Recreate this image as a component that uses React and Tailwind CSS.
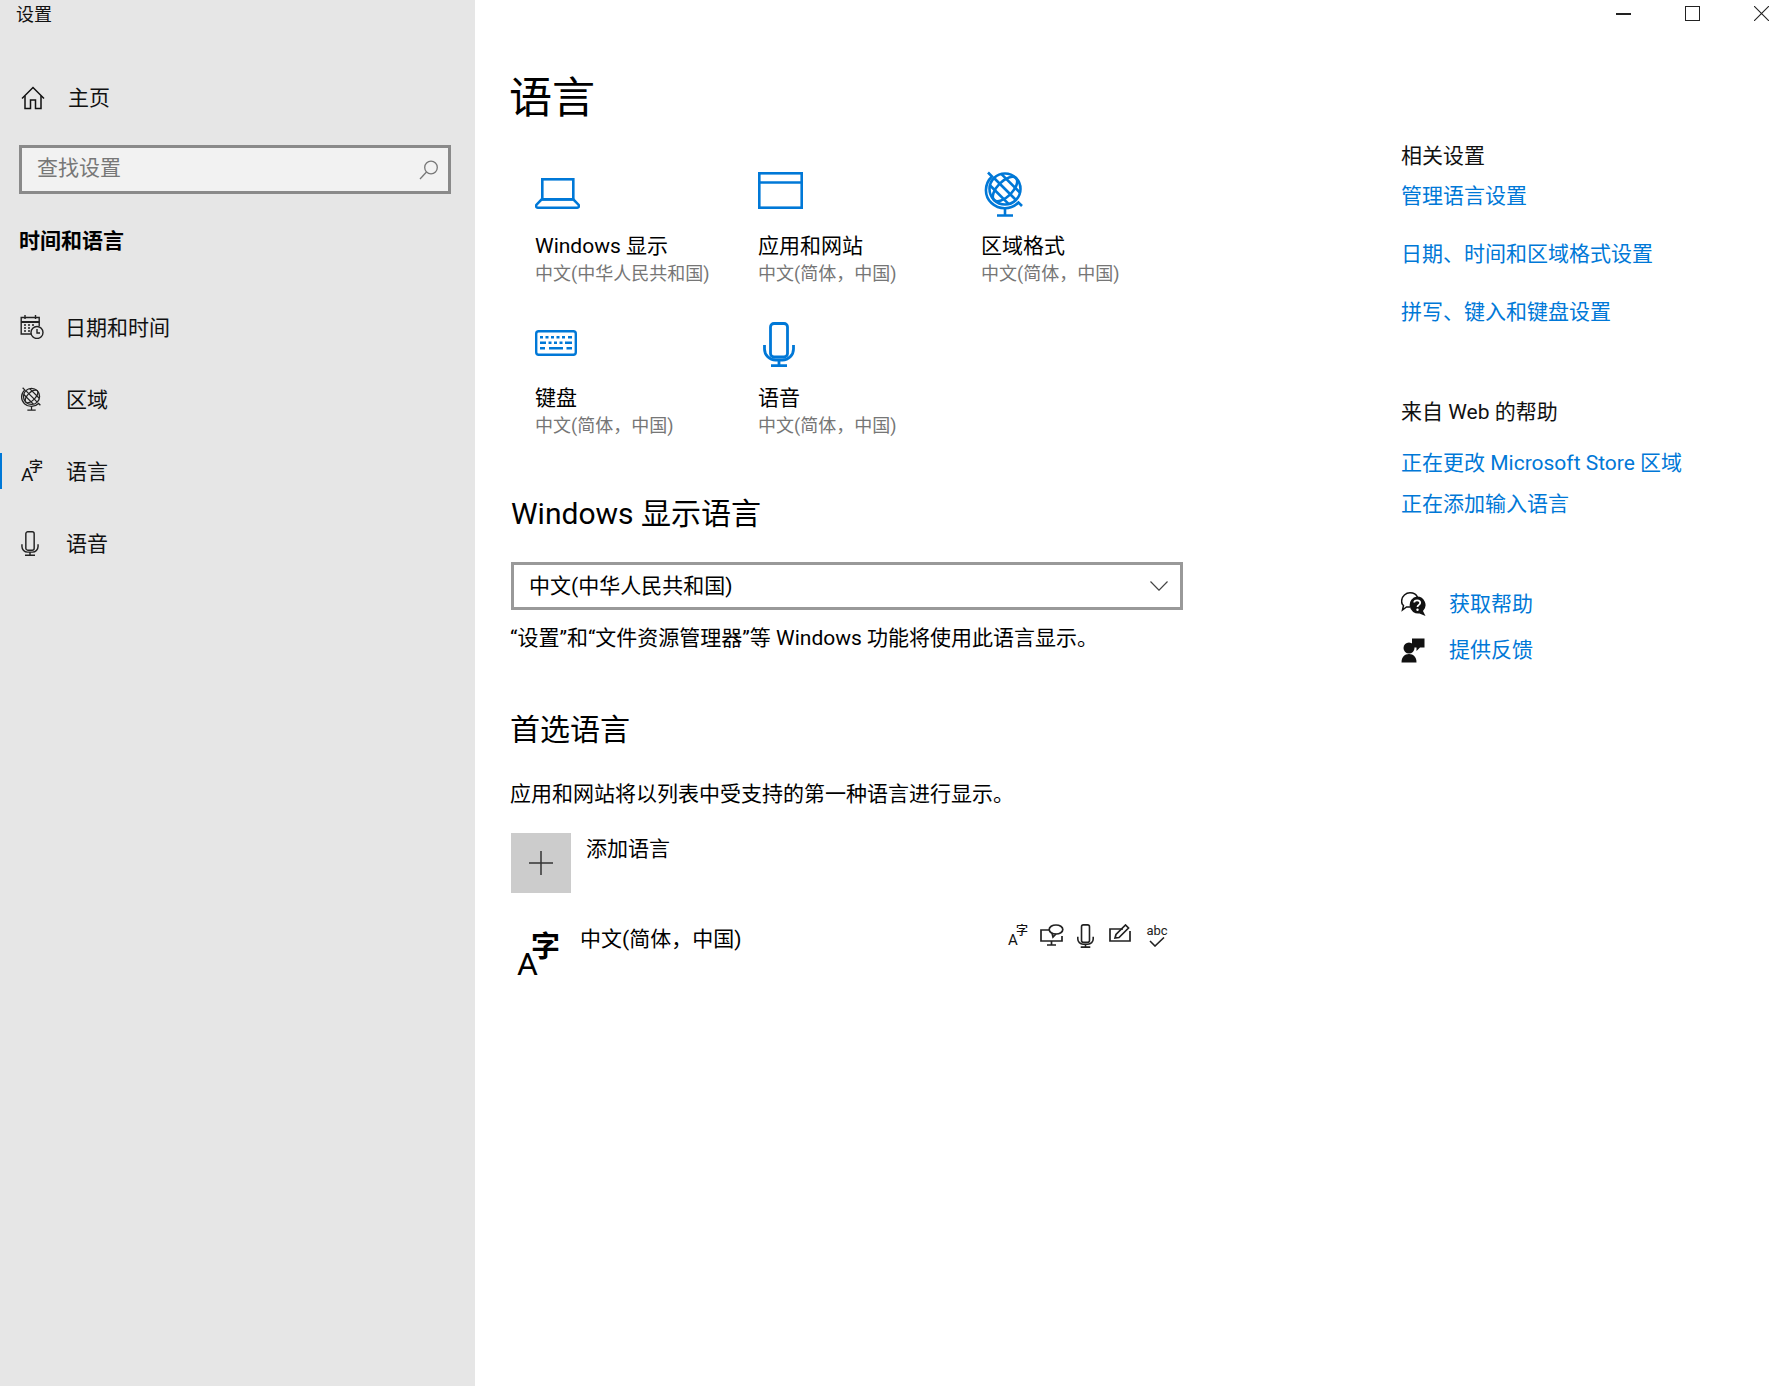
const Home = () => (
  <svg width="24" height="24" viewBox="0 0 24 24" fill="none" stroke="#111" strokeWidth="1.5" className="shrink-0">
    <path d="M1 12.5 12 1.5l11 11" />
    <path d="M4 10v12.5h5.5V14h5v8.5H20V10" />
  </svg>
);
const SearchIcon = () => (
  <svg width="20" height="20" viewBox="0 0 20 20" fill="none" stroke="#777" strokeWidth="1.3">
    <circle cx="12" cy="7.5" r="6.3" />
    <path d="M7.5 12 1 19" />
  </svg>
);
const Calendar = () => (
  <svg width="24" height="24" viewBox="0 0 24 24" fill="none" stroke="#222" strokeWidth="1.4" className="shrink-0">
    <path d="M11 19H1.2V2.5h18V11" />
    <path d="M1 7h18.5" strokeWidth="2" />
    <path d="M5 0v4M15.5 0v4" />
    <path d="M4 10h2M8 10h2M12 10h2M4 13h2M8 13h2M4 16h2M8 16h2" strokeWidth="1.6" />
    <circle cx="17" cy="17.5" r="6" />
    <path d="M17 14v4h3" />
  </svg>
);
const Globe = ({ w, h, color, sw }) => (
  <svg width={w} height={h} viewBox="0 0 42 46" fill="none" stroke={color} strokeWidth={sw} className="shrink-0">
    <g transform="rotate(45 22 18)">
      <circle cx="22" cy="18" r="15.5" />
      <ellipse cx="22" cy="18" rx="7.5" ry="15.5" />
      <path d="M6.5 18h31M9 10h26M9 26h26" />
    </g>
    <path d="M5 1.5 9 5.5C1 13 1 25 8.5 32c7.5 7 19.500 7 27-.5l3.500 3.500" />
    <path d="M22 37v7.500M14 44.500h16" />
  </svg>
);
const MicDark = ({ w, h, sw = 2.6 }) => (
  <svg width={w} height={h} viewBox="0 0 32 45" fill="none" stroke="#222" strokeWidth={sw} className="shrink-0">
    <rect x="8.500" y="1.500" width="15" height="33" rx="3.500" />
    <path d="M1.500 24v4a10 10 0 0 0 10 10h9a10 10 0 0 0 10-10v-4M16 38v6M7 43.500h18" />
  </svg>
);
const Laptop = () => (
  <svg width="45" height="31" viewBox="0 0 45 31" fill="none" stroke="#0078d7" strokeWidth="2.600">
    <rect x="7.300" y="1.300" width="31" height="20" />
    <path d="M6.500 21.500h32l5 5.200c1 1.500.3 3-1.200 3H2.700c-1.500 0-2.200-1.500-1.200-3z" />
  </svg>
);
const WindowIcon = () => (
  <svg width="45" height="37" viewBox="0 0 45 37" fill="none" stroke="#0078d7" strokeWidth="2.600">
    <rect x="1.300" y="1.300" width="42.400" height="34.400" />
    <path d="M1 10.500h43" />
  </svg>
);
const Keyboard = () => (
  <svg width="42" height="26" viewBox="0 0 42 26" fill="none">
    <rect x="1.200" y="1.200" width="39.600" height="23.600" rx="2.500" stroke="#0078d7" strokeWidth="2.400" />
    <path
      d="M5 6h3v2.500H5zM10.500 6h3v2.500h-3zM16 6h3v2.500h-3zM21.500 6h3v2.500h-3zM27 6h3v2.500h-3zM33 6h4v2.500h-4zM5 11.500h6V14H5zM13.500 11.500h3V14h-3zM19 11.500h3V14h-3zM24.500 11.500h3V14h-3zM30 11.500h7V14h-7zM5 17h5v2.500H5zM14 17h14v2.500H14zM31.500 17H37v2.500h-5.500z"
      fill="#0078d7"
    />
  </svg>
);
const MicBlue = () => (
  <svg width="32" height="45" viewBox="0 0 32 45" fill="none" stroke="#0078d7" strokeWidth="2.800">
    <rect x="7.500" y="1.500" width="17" height="33.500" rx="3.500" />
    <path d="M1.500 23v4a11 11 0 0 0 11 11h7a11 11 0 0 0 11-11v-4M16 38v6M8 43.600h16" />
  </svg>
);
const Plus = () => (
  <svg width="24" height="24" viewBox="0 0 24 24" stroke="#333" strokeWidth="1.500">
    <path d="M12 0v24M0 12h24" />
  </svg>
);
const Chevron = () => (
  <svg width="18" height="10" viewBox="0 0 18 10" fill="none" stroke="#444" strokeWidth="1.200">
    <path d="M.5.500 9 9.200 17.500.500" />
  </svg>
);
const MonitorBubble = () => (
  <svg width="24" height="22" viewBox="0 0 24 22" fill="none" stroke="#222" strokeWidth="1.700" className="shrink-0">
    <path d="M9 6H1v11h21v-5" />
    <path d="M11.500 17v3.500M7 21h9" />
    <ellipse cx="16" cy="5.500" rx="6.800" ry="4.500" />
    <path d="M12 9l1 4 3-3" />
  </svg>
);
const PenBox = () => (
  <svg width="22" height="22" viewBox="0 0 22 22" fill="none" stroke="#222" strokeWidth="1.700" className="shrink-0">
    <path d="M14 5H1v12h20V7" />
    <path d="M6 14l1-3.500L16.500 1l3 3-9.500 9.500z" />
  </svg>
);
const HelpIcon = () => (
  <svg width="25" height="25" viewBox="0 0 25 25" className="shrink-0">
    <path d="M9 15H5.500L1.500 18l1-4.500C.5 12 .5 10 .7 8.500.9 4 5 .8 9 .8c3.500 0 6.500 2 7.500 4.500" fill="none" stroke="#111" strokeWidth="1.500" />
    <path d="M16 4.500a8.500 8.500 0 0 1 6 14.500l2.500 5-6-2.500A8.500 8.500 0 1 1 16 4.500z" fill="#111" />
    <path d="M13.200 10.500c.2-3 6-3 6 .3 0 2.200-2.700 2-2.700 4.200" fill="none" stroke="#fff" strokeWidth="1.800" />
    <circle cx="16.500" cy="17.700" r="1.200" fill="#fff" />
  </svg>
);
const FeedbackIcon = () => (
  <svg width="24" height="25" viewBox="0 0 24 25" fill="#111" className="shrink-0">
    <circle cx="8" cy="10" r="5.500" />
    <path d="M.5 24.500c0-5.500 3-8.500 7.500-8.500s7.500 3 7.500 8.500z" />
    <path d="M11 .5h12.500v9H19l-3.500 3.500V9.500H11z" />
  </svg>
);

const Tile = ({ icon, title, sub }) => (
  <div>
    <div className="h-[50px]">{icon}</div>
    <div className="mt-[14px] text-[21px] leading-[28px] text-black">{title}</div>
    <div className="mt-[2px] text-[18px] leading-[24px] text-[#767676]">{sub}</div>
  </div>
);

const NavItem = ({ icon, label, active, tight }) => (
  <div className="relative flex h-[72px] items-center pl-[20px]">
    {active && <div className="absolute left-0 top-[18px] h-[36px] w-[2px] bg-[#0078d7]" />}
    <div className="flex w-[24px] justify-start">{icon}</div>
    <span className={tight ? "ml-[21px] mt-[2px] text-[21px] leading-[28px] text-[#111]" : "ml-[22px] mt-[2px] text-[21px] leading-[28px] text-[#111]"}>{label}</span>
  </div>
);

const RLink = ({ children, className = "" }) => (
  <div className={`text-[21px] leading-[28px] text-[#0078d7] ${className}`}>{children}</div>
);

export default function App() {
  return (
    <div
      lang="zh-CN"
      className="flex h-[1386px] w-[1789px] overflow-hidden bg-white font-['Roboto','Noto_Sans_CJK_SC',sans-serif]"
    >
      <aside className="w-[475px] shrink-0 bg-[#e6e6e6]">
        <div className="pl-[16px] text-[18px] leading-[29px] text-[#111]">设置</div>
        <div className="mt-[45px] flex h-[48px] items-center pl-[21px]">
          <Home />
          <span className="ml-[23px] text-[21px] leading-[28px] text-[#111]">主页</span>
        </div>
        <div className="ml-[19px] mt-[23px] flex h-[49px] w-[432px] items-center justify-between border-[3px] border-[#8a8a8a] bg-[#f2f2f2] pl-[15px] pr-[9px]">
          <span className="mb-[4px] text-[21px] leading-[28px] text-[#777]">查找设置</span>
          <SearchIcon />
        </div>
        <div className="ml-[19px] mt-[32px] text-[21px] font-bold leading-[30px] text-black">时间和语言</div>
        <div className="mt-[35px]">
          <NavItem tight icon={<Calendar />} label="日期和时间" />
          <NavItem icon={<Globe w={22} h={24} color="#222" sw={2.400} />} label="区域" />
          <NavItem
            active
            icon={
              <div className="relative h-[24px] w-[24px] text-[#111]">
                <span className="absolute left-[1px] top-[6px] text-[19px] leading-none">A</span>
                <span className="absolute left-[9px] top-0 text-[14px] font-medium leading-none">字</span>
              </div>
            }
            label="语言"
          />
          <NavItem icon={<div className="pl-[1px]"><MicDark w={18} h={25} /></div>} label="语音" />
        </div>
      </aside>

      <main className="min-w-0 flex-1">
        <div className="flex h-[27px] items-start justify-end">
          <div className="mr-[20px] mt-[6px] flex items-start gap-[54px]">
            <div className="mt-[7px] h-[1.500px] w-[15px] bg-[#222]" />
            <div className="h-[15px] w-[15px] border-[1.500px] border-[#222]" />
            <svg width="15" height="15" viewBox="0 0 15 15" stroke="#222" strokeWidth="1.100">
              <path d="M0 0l15 15M15 0 0 15" />
            </svg>
          </div>
        </div>
        <div className="flex">
          <section className="w-[926px] shrink-0 pl-[36px]">
            <h1 className="-ml-[2px] mt-[43px] text-[43px] leading-[56px] text-black">语言</h1>
            <div className="ml-[24px] mt-[42px] grid grid-cols-[223px_223px_223px] gap-y-[34px]">
              <Tile
                icon={<div className="pt-[10px]"><Laptop /></div>}
                title="Windows 显示"
                sub="中文(中华人民共和国)"
              />
              <Tile icon={<div className="pt-[4px]"><WindowIcon /></div>} title="应用和网站" sub="中文(简体，中国)" />
              <Tile
                icon={<div className="pl-[2px] pt-[3px]"><Globe w={42} h={46} color="#0078d7" sw={2.600} /></div>}
                title="区域格式"
                sub="中文(简体，中国)"
              />
              <Tile icon={<div className="pt-[10px]"><Keyboard /></div>} title="键盘" sub="中文(简体，中国)" />
              <Tile icon={<div className="pl-[5px] pt-[2px]"><MicBlue /></div>} title="语音" sub="中文(简体，中国)" />
            </div>

            <h2 className="mt-[56px] text-[30px] leading-[40px] text-black">Windows 显示语言</h2>
            <div className="mt-[28px] flex h-[48px] w-[672px] items-center justify-between border-[3px] border-[#999] pl-[15px] pr-[12px]">
              <span className="text-[21px] leading-[28px] text-black">中文(中华人民共和国)</span>
              <Chevron />
            </div>
            <p className="-ml-px mt-[14px] text-[21px] leading-[28px] text-black">
              “设置”和“文件资源管理器”等 Windows 功能将使用此语言显示。
            </p>

            <h2 className="-ml-px mt-[58px] text-[30px] leading-[40px] text-black">首选语言</h2>
            <p className="-ml-px mt-[30px] text-[21px] leading-[28px] text-black">应用和网站将以列表中受支持的第一种语言进行显示。</p>

            <div className="mt-[25px] flex h-[60px]">
              <div className="flex h-[60px] w-[60px] items-center justify-center bg-[#cccccc]">
                <Plus />
              </div>
              <span className="ml-[15px] mt-[2px] text-[21px] leading-[28px] text-black">添加语言</span>
            </div>

            <div className="mt-[31px] flex w-[657px] items-start">
              <div className="relative ml-[6px] mt-[7px] h-[44px] w-[42px] text-black">
                <span className="absolute left-0 top-[17px] text-[32px] leading-none">A</span>
                <span className="absolute left-[14px] top-[2px] text-[29px] font-bold leading-none">字</span>
              </div>
              <span className="ml-[21px] mt-px text-[21px] leading-[28px] text-black">中文(简体，中国)</span>
              <div className="ml-auto flex items-start gap-[10px]">
                <div className="relative h-[22px] w-[22px] text-[#111]">
                  <span className="absolute left-0 top-[9px] text-[15px] leading-none">A</span>
                  <span className="absolute left-[8px] top-px text-[12px] font-medium leading-none">字</span>
                </div>
                <MonitorBubble />
                <div className="ml-[3px] mr-[5px]"><MicDark w={17} h={24} sw={3} /></div>
                <PenBox />
                <div className="ml-[5px] flex h-[25px] w-[22px] flex-col items-center">
                  <span className="text-[13px] leading-[13px] text-[#222]">abc</span>
                  <svg width="16" height="10" viewBox="0 0 16 10" fill="none" stroke="#222" strokeWidth="1.600">
                    <path d="M1 4l5 5 9-8.500" />
                  </svg>
                </div>
              </div>
            </div>
          </section>

          <section className="flex-1">
            <div className="mt-[115px] text-[21px] leading-[28px] text-[#111]">相关设置</div>
            <RLink className="mt-[12px]">管理语言设置</RLink>
            <RLink className="mt-[30px]">日期、时间和区域格式设置</RLink>
            <RLink className="mt-[30px]">拼写、键入和键盘设置</RLink>
            <div className="mt-[72px] text-[21px] leading-[28px] text-[#111]">来自 Web 的帮助</div>
            <RLink className="mt-[23px]">正在更改 Microsoft Store 区域</RLink>
            <RLink className="mt-[13px]">正在添加输入语言</RLink>
            <div className="mt-[72px] flex h-[28px] items-center">
              <HelpIcon />
              <RLink className="ml-[23px]">获取帮助</RLink>
            </div>
            <div className="mt-[18px] flex h-[28px] items-center">
              <FeedbackIcon />
              <RLink className="ml-[24px]">提供反馈</RLink>
            </div>
          </section>
        </div>
      </main>
    </div>
  );
}
